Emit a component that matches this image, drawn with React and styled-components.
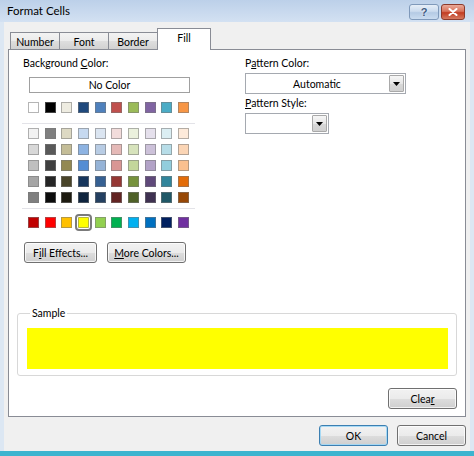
import React from "react";
import styled, { createGlobalStyle, css } from "styled-components";

const GlobalStyle = createGlobalStyle`
  html, body {
    margin: 0;
    padding: 0;
    background: #ffffff;
  }
  body {
    font-family: "Lato", "Noto Sans", sans-serif;
    font-size: 10.5px;
    color: #000;
  }
`;

const THEME_ROW = ["#FFFFFF", "#000000", "#EEECE1", "#1F497D", "#4F81BD", "#C0504D", "#9BBB59", "#8064A2", "#4BACC6", "#F79646"];

const TINTS = [
  ["#F2F2F2", "#7F7F7F", "#DDD9C3", "#C6D9F0", "#DBE5F1", "#F2DCDB", "#EBF1DD", "#E5E0EC", "#DBEEF3", "#FDEADA"],
  ["#D8D8D8", "#595959", "#C4BD97", "#8DB3E2", "#B8CCE4", "#E5B9B7", "#D7E3BC", "#CCC1D9", "#B7DDE8", "#FBD5B5"],
  ["#BFBFBF", "#3F3F3F", "#938953", "#548DD4", "#95B3D7", "#D99694", "#C3D69B", "#B2A2C7", "#92CDDC", "#FAC08F"],
  ["#A5A5A5", "#262626", "#494429", "#17365D", "#366092", "#953734", "#76923C", "#5F497A", "#31859B", "#E36C09"],
  ["#7F7F7F", "#0C0C0C", "#1D1B10", "#0F243E", "#244061", "#632423", "#4F6128", "#3F3151", "#205867", "#974806"],
];

const STANDARD = ["#C00000", "#FF0000", "#FFC000", "#FFFF00", "#92D050", "#00B050", "#00B0F0", "#0070C0", "#002060", "#7030A0"];

const TABS = [
  { label: "Number", width: 50 },
  { label: "Font", width: 50 },
  { label: "Border", width: 50 },
  { label: "Fill", width: 54, active: true },
];

const Window = styled.div`
  width: 474px;
  height: 456px;
  box-sizing: border-box;
  display: flex;
  flex-direction: column;
  background: #dce7f3;
  border-bottom: 5px solid #3db4cf;
  overflow: hidden;
`;

const TitleBar = styled.div`
  flex: none;
  height: 22px;
  display: flex;
  align-items: flex-start;
  padding: 0 9px 0 7px;
  background: linear-gradient(#bcd0e9, #d3e1f2);
`;

const Title = styled.div`
  flex: 1;
  font-size: 11.5px;
  line-height: 22px;
  color: #000;
`;

const CaptionButtons = styled.div`
  display: flex;
  gap: 2px;
  margin-top: 4px;
`;

const CaptionButton = styled.div`
  width: ${(p) => p.$w}px;
  height: 16px;
  box-sizing: border-box;
  border-radius: 3px;
  display: flex;
  align-items: center;
  justify-content: center;
  font: bold 11px "Liberation Sans", sans-serif;
  ${(p) =>
    p.$close
      ? css`
          border: 1px solid #8c3a2c;
          background: linear-gradient(#eaa999, #d8735c 45%, #c23c22 55%, #d57a60);
        `
      : css`
          border: 1px solid #7f99ba;
          background: linear-gradient(#e6eef8, #cbdbee 45%, #b4cae4 55%, #cadcf0);
          color: #3d5a80;
          text-shadow: 0 0 2px #fff;
        `}
`;

const Body = styled.div`
  flex: 1;
  display: flex;
  flex-direction: column;
  margin: 0 4px;
  padding: 6px 4px 0;
  background: #f0f0f0;
`;

const TabRow = styled.div`
  position: relative;
  z-index: 1;
  height: 21px;
  display: flex;
  align-items: flex-end;
  padding-left: 2px;
`;

const Tab = styled.div`
  width: ${(p) => p.$w}px;
  box-sizing: border-box;
  margin-right: -1px;
  border: 1px solid #898c95;
  border-bottom: none;
  display: flex;
  justify-content: center;
  ${(p) =>
    p.$active
      ? css`
          height: 22px;
          margin-bottom: -1px;
          background: #ffffff;
          align-items: center;
          padding-bottom: 3px;
        `
      : css`
          height: 17px;
          background: linear-gradient(#f3f3f3, #ebebeb 50%, #dedede 51%, #d2d2d2);
          align-items: center;
          padding-top: 1px;
        `}
`;

const Panel = styled.div`
  flex: 1;
  display: flex;
  flex-direction: column;
  background: #ffffff;
  border: 1px solid #898c95;
  padding: 6px 8px 7px 8px;
`;

const TopRow = styled.div`
  display: flex;
  padding-left: 5px;
`;

const LeftCol = styled.div`
  width: 173px;
  display: flex;
  flex-direction: column;
`;

const RightCol = styled.div`
  margin-left: 50px;
  display: flex;
  flex-direction: column;
`;

const Label = styled.div`
  line-height: 14px;
  padding-left: ${(p) => p.$indent || 0}px;
  margin-top: ${(p) => p.$top || 0}px;
`;

const NoColor = styled.div`
  width: 161px;
  height: 16px;
  box-sizing: border-box;
  margin: 7px 0 0 7px;
  border: 1px solid #a0a0a0;
  display: flex;
  align-items: center;
  justify-content: center;
`;

const SwatchGrid = styled.div`
  display: grid;
  grid-template-columns: repeat(10, 11px);
  column-gap: 5.67px;
  row-gap: 5px;
  margin: ${(p) => p.$top}px 0 0 6px;
`;

const Swatch = styled.div`
  width: 11px;
  height: 11px;
  box-sizing: border-box;
  border: 1px solid rgba(120, 120, 120, 0.55);
  background: ${(p) => p.$color};
  ${(p) =>
    p.$selected &&
    css`
      outline: 2px solid #7b7b7b;
      outline-offset: 1px;
      border-radius: 1px;
    `}
`;

const Separator = styled.div`
  height: 1px;
  background: #e3e3e8;
  margin-top: ${(p) => p.$top}px;
`;

const ButtonRow = styled.div`
  display: flex;
  gap: 10px;
  margin: 14px 0 0 2px;
`;

const Button = styled.button`
  width: ${(p) => p.$w}px;
  height: 21px;
  box-sizing: border-box;
  padding: 0;
  font: inherit;
  color: #000;
  border-radius: 3px;
  border: 1px solid ${(p) => (p.$default ? "#3c7fb1" : "#707070")};
  background: linear-gradient(#f2f2f2, #ebebeb 50%, #dddddd 51%, #cfcfcf);
  box-shadow: inset 0 0 0 1px ${(p) => (p.$default ? "rgba(160, 215, 245, 0.9)" : "rgba(255, 255, 255, 0.75)")};
`;

const Combo = styled.div`
  width: ${(p) => p.$w}px;
  height: 21px;
  box-sizing: border-box;
  margin-top: 3px;
  border: 1px solid #a5a9b0;
  background: #ffffff;
  display: flex;
  align-items: stretch;
`;

const ComboText = styled.div`
  flex: 1;
  display: flex;
  align-items: center;
  justify-content: center;
`;

const ComboArrow = styled.div`
  width: 15px;
  box-sizing: border-box;
  margin: 1px;
  border: 1px solid #a9a9a9;
  border-radius: 1px;
  background: linear-gradient(#f6f6f6, #e6e6e6 50%, #d8d8d8 51%, #d0d0d0);
  display: flex;
  align-items: center;
  justify-content: center;
`;

const SampleGroup = styled.fieldset`
  margin: auto 0 0;
  min-width: 0;
  padding: 8px 8px 6px 9px;
  border: 1px solid #d8d8d8;
  border-radius: 3px;
`;

const SampleLegend = styled.legend`
  margin-left: 3px;
  padding: 0 2px;
  line-height: 14px;
`;

const SampleFill = styled.div`
  height: 41px;
  background: ${(p) => p.$color};
`;

const ClearRow = styled.div`
  display: flex;
  justify-content: flex-end;
  margin-top: 12px;
`;

const Footer = styled.div`
  display: flex;
  justify-content: flex-end;
  gap: 9px;
  padding: 8px 0 5px;
`;

const Arrow = () => (
  <svg width="7" height="4" viewBox="0 0 7 4">
    <path d="M0 0 H7 L3.5 4 Z" fill="#000" />
  </svg>
);

const CloseGlyph = () => (
  <svg width="10" height="8" viewBox="0 0 10 8">
    <path d="M1.5 1 L8.5 7 M8.5 1 L1.5 7" stroke="#fff" strokeWidth="2" strokeLinecap="round" />
  </svg>
);

const SELECTED = "#FFFF00";

export default function App() {
  return (
    <>
      <GlobalStyle />
      <Window>
        <TitleBar>
          <Title>Format Cells</Title>
          <CaptionButtons>
            <CaptionButton $w={30}>?</CaptionButton>
            <CaptionButton $w={24} $close>
              <CloseGlyph />
            </CaptionButton>
          </CaptionButtons>
        </TitleBar>

        <Body>
          <TabRow>
            {TABS.map((t) => (
              <Tab key={t.label} $w={t.width} $active={t.active}>
                {t.label}
              </Tab>
            ))}
          </TabRow>

          <Panel>
            <TopRow>
              <LeftCol>
                <Label $indent={1}>
                  Background <u>C</u>olor:
                </Label>
                <NoColor>No Color</NoColor>
                <SwatchGrid $top={9}>
                  {THEME_ROW.map((c) => (
                    <Swatch key={c} $color={c} />
                  ))}
                </SwatchGrid>
                <Separator $top={10} />
                <SwatchGrid $top={4}>
                  {TINTS.flat().map((c, i) => (
                    <Swatch key={i} $color={c} />
                  ))}
                </SwatchGrid>
                <Separator $top={5} />
                <SwatchGrid $top={8}>
                  {STANDARD.map((c) => (
                    <Swatch key={c} $color={c} $selected={c === SELECTED} />
                  ))}
                </SwatchGrid>
                <ButtonRow>
                  <Button $w={73}>
                    F<u>i</u>ll Effects...
                  </Button>
                  <Button $w={79}>
                    <u>M</u>ore Colors...
                  </Button>
                </ButtonRow>
              </LeftCol>

              <RightCol>
                <Label>
                  P<u>a</u>ttern Color:
                </Label>
                <Combo $w={161}>
                  <ComboText>Automatic</ComboText>
                  <ComboArrow>
                    <Arrow />
                  </ComboArrow>
                </Combo>
                <Label $top={2}>
                  <u>P</u>attern Style:
                </Label>
                <Combo $w={84}>
                  <ComboText />
                  <ComboArrow>
                    <Arrow />
                  </ComboArrow>
                </Combo>
              </RightCol>
            </TopRow>

            <SampleGroup>
              <SampleLegend>Sample</SampleLegend>
              <SampleFill $color={SELECTED} />
            </SampleGroup>

            <ClearRow>
              <Button $w={69}>
                Clea<u>r</u>
              </Button>
            </ClearRow>
          </Panel>

          <Footer>
            <Button $w={69} $default>
              OK
            </Button>
            <Button $w={69}>Cancel</Button>
          </Footer>
        </Body>
      </Window>
    </>
  );
}
